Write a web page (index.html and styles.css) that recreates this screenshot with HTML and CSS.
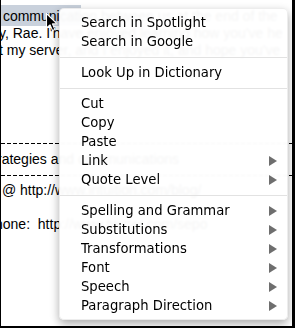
FILE: index.html
```html
<!DOCTYPE html>
<html>
<head>
<meta charset="utf-8">
<link rel="stylesheet" href="styles.css">
</head>
<body>
<div class="frame">
  <div class="doc">
    <div class="line l1"><span class="sel">&nbsp;communicati</span>on between us at the end of the</div>
    <div class="line">y, Rae. I'have enjoyed learning how you've he</div>
    <div class="line">t my server, and I enjoyed it, and hope you've</div>
    <div class="dash d1"></div>
    <div class="line l4">rategies and communications</div>
    <div class="dash d2"></div>
    <div class="line l5">&nbsp;@ http://www.intuition.com/blog/</div>
    <div class="line l6">hone:&nbsp; http://www.twitter.com/sepo</div>
  </div>

  <svg class="cursor" width="14" height="20" viewBox="0 0 14 20">
    <path d="M1.5 1.5 L1.5 16 L5 12.8 L7.6 18.6 L9.9 17.6 L7.4 11.9 L12 11.9 Z" fill="#000" stroke="#fff" stroke-width="1.1" stroke-linejoin="round"/>
  </svg>

  <div class="menu">
    <div class="item">Search in Spotlight</div>
    <div class="item">Search in Google</div>
    <div class="sep"></div>
    <div class="item">Look Up in Dictionary</div>
    <div class="sep"></div>
    <div class="item">Cut</div>
    <div class="item">Copy</div>
    <div class="item">Paste</div>
    <div class="item sub">Link<span class="arrow"></span></div>
    <div class="item sub">Quote Level<span class="arrow"></span></div>
    <div class="sep"></div>
    <div class="item sub">Spelling and Grammar<span class="arrow"></span></div>
    <div class="item sub">Substitutions<span class="arrow"></span></div>
    <div class="item sub">Transformations<span class="arrow"></span></div>
    <div class="item sub">Font<span class="arrow"></span></div>
    <div class="item sub">Speech<span class="arrow"></span></div>
    <div class="item sub">Paragraph Direction<span class="arrow"></span></div>
  </div>
</div>
</body>
</html>
```
FILE: styles.css
```css
html, body {
  margin: 0;
  padding: 0;
  background: #fff;
  overflow: hidden;
}
.frame {
  position: relative;
  width: 295px;
  height: 328px;
  box-sizing: border-box;
  border-left: 1px solid #000;
  border-right: 3px solid #000;
  border-bottom: 2px solid #000;
  overflow: hidden;
  background: #fff;
}
.doc {
  font-family: "Liberation Sans", Arial, sans-serif;
  font-size: 14px;
  color: #000;
  white-space: nowrap;
  padding-top: 8px;
}
.line {
  height: 17px;
  line-height: 17px;
  margin-left: -2px;
}
.sel {
  background: #c9d1dc;
  padding: 3px 0 2px;
}
.dash {
  height: 1px;
  background: repeating-linear-gradient(90deg, #000 0 4px, transparent 4px 6px);
}
.d1 { margin-top: 84px; }
.l4 { margin-top: 7px; margin-left: -4px; }
.d2 { margin-top: 7px; }
.l5 { margin-top: 6px; margin-left: -3px; }
.l6 { margin-top: 17px; margin-left: -6px; }

.cursor {
  position: absolute;
  left: 44px;
  top: 12px;
}
.menu {
  position: absolute;
  left: 58px;
  top: 8px;
  width: 229px;
  box-sizing: border-box;
  padding: 4px 0;
  background: rgba(255, 255, 255, 0.955);
  backdrop-filter: blur(1px);
  border: 1px solid rgba(0, 0, 0, 0.07);
  border-radius: 5px;
  box-shadow: 0 4px 10px rgba(0, 0, 0, 0.33);
  font-family: "DejaVu Sans", "Liberation Sans", sans-serif;
  font-size: 13.2px;
  color: #000;
}
.item {
  display: flex;
  align-items: center;
  justify-content: space-between;
  height: 19px;
  line-height: 19px;
  padding: 0 10px 0 21px;
}
.arrow {
  width: 0;
  height: 0;
  border-top: 5px solid transparent;
  border-bottom: 5px solid transparent;
  border-left: 8px solid #6e6e6e;
}
.sep {
  height: 12px;
  display: flex;
  align-items: center;
}
.sep::before {
  content: "";
  flex: 1;
  height: 1px;
  background: #e2e2e2;
}
```
